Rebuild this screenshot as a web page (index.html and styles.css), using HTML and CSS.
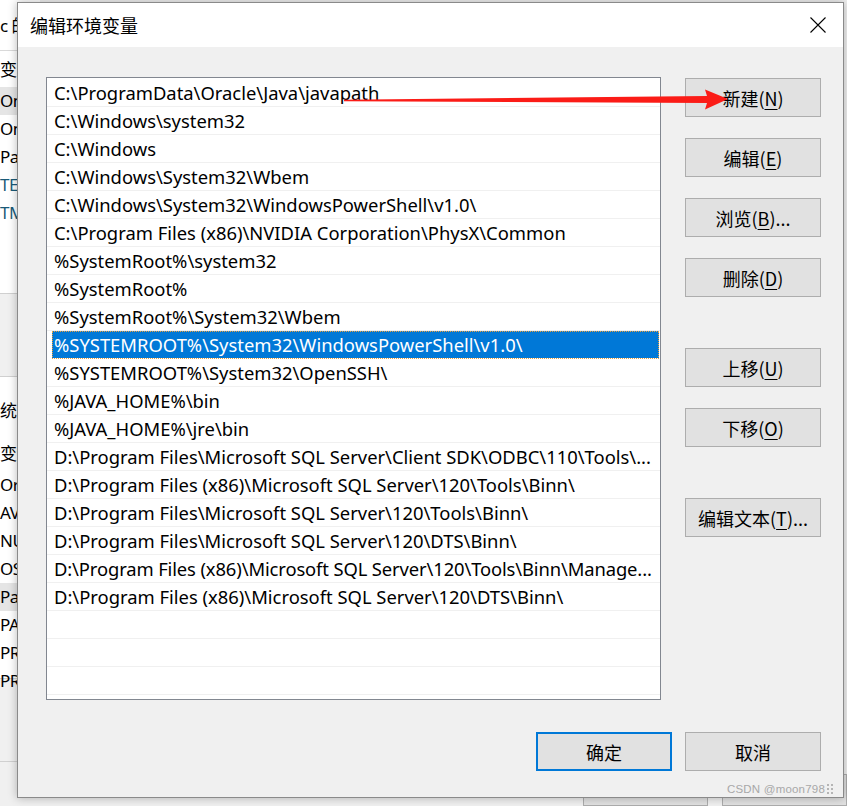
FILE: index.html
```html
<!DOCTYPE html>
<html lang="zh-CN">
<head>
<meta charset="utf-8">
<title>编辑环境变量</title>
<link rel="stylesheet" href="styles.css">
</head>
<body>
<div class="desktop">
  <div class="bgwin">
    <div class="bg-col">
      <div class="bg-title">c 的</div>
      <div class="bg-panel">
        <div class="bg-head">变量</div>
        <div class="bg-row hl">On</div>
        <div class="bg-row">On</div>
        <div class="bg-row">Pat</div>
        <div class="bg-row cy">TEI</div>
        <div class="bg-row cy">TM</div>
      </div>
      <div class="bg-gap"></div>
      <div class="bg-panel sys">
        <div class="bg-head h1">统</div>
        <div class="bg-head h2">变量</div>
        <div class="bg-row">Ori</div>
        <div class="bg-row">AV</div>
        <div class="bg-row">NU</div>
        <div class="bg-row">OS</div>
        <div class="bg-row hl">Pat</div>
        <div class="bg-row">PA</div>
        <div class="bg-row">PR</div>
        <div class="bg-row">PR</div>
      </div>
      <div class="bg-gap2"></div>
    </div>
    <div class="bg-bottom">
      <div class="bg-btn"></div>
      <div class="bg-btn"></div>
    </div>
  </div>

  <div class="dialog">
    <div class="titlebar">
      <span class="title">编辑环境变量</span>
      <svg class="close" width="16" height="16" viewBox="0 0 16 16"><path d="M0.5 0.5 L15.5 15.5 M15.5 0.5 L0.5 15.5" stroke="#000" stroke-width="1.1" fill="none"/></svg>
    </div>
    <div class="body">
      <div class="list">
        <div class="row">C:\ProgramData\Oracle\Java\javapath</div>
        <div class="row">C:\Windows\system32</div>
        <div class="row">C:\Windows</div>
        <div class="row">C:\Windows\System32\Wbem</div>
        <div class="row">C:\Windows\System32\WindowsPowerShell\v1.0\</div>
        <div class="row">C:\Program Files (x86)\NVIDIA Corporation\PhysX\Common</div>
        <div class="row">%SystemRoot%\system32</div>
        <div class="row">%SystemRoot%</div>
        <div class="row">%SystemRoot%\System32\Wbem</div>
        <div class="row sel">%SYSTEMROOT%\System32\WindowsPowerShell\v1.0\</div>
        <div class="row">%SYSTEMROOT%\System32\OpenSSH\</div>
        <div class="row">%JAVA_HOME%\bin</div>
        <div class="row">%JAVA_HOME%\jre\bin</div>
        <div class="row">D:\Program Files\Microsoft SQL Server\Client SDK\ODBC\110\Tools\...</div>
        <div class="row">D:\Program Files (x86)\Microsoft SQL Server\120\Tools\Binn\</div>
        <div class="row">D:\Program Files\Microsoft SQL Server\120\Tools\Binn\</div>
        <div class="row">D:\Program Files\Microsoft SQL Server\120\DTS\Binn\</div>
        <div class="row tight">D:\Program Files (x86)\Microsoft SQL Server\120\Tools\Binn\Manage...</div>
        <div class="row">D:\Program Files (x86)\Microsoft SQL Server\120\DTS\Binn\</div>
        <div class="row"></div>
        <div class="row"></div>
        <div class="row"></div>
        <div class="row"></div>
      </div>
      <div class="buttons">
        <button class="btn">新建(<u>N</u>)</button>
        <button class="btn">编辑(<u>E</u>)</button>
        <button class="btn">浏览(<u>B</u>)...</button>
        <button class="btn">删除(<u>D</u>)</button>
        <button class="btn gap">上移(<u>U</u>)</button>
        <button class="btn">下移(<u>O</u>)</button>
        <button class="btn gap">编辑文本(<u>T</u>)...</button>
      </div>
    </div>
    <div class="footer">
      <button class="btn default">确定</button>
      <button class="btn">取消</button>
    </div>
  </div>

  <svg class="arrow" width="847" height="806" viewBox="0 0 847 806">
    <path d="M344 99.8 L707 96 L705 89.5 L728 99 L705 109.5 L707 103 L344 101.2 Z" fill="#fb1c17"/>
  </svg>

  <div class="watermark">CSDN @moon798<svg class="wm-icon" width="7" height="10" viewBox="0 0 7 10"><g fill="#b5b5b5"><rect x="0" y="0" width="2" height="2"/><rect x="4" y="0" width="2" height="2"/><rect x="0" y="4" width="2" height="2"/><rect x="4" y="4" width="2" height="2"/><rect x="0" y="8" width="2" height="2"/><rect x="4" y="8" width="2" height="2"/></g></svg></div>
</div>
</body>
</html>
```
FILE: styles.css
```css
html, body {
  margin: 0;
  padding: 0;
}
body {
  width: 847px;
  height: 806px;
  overflow: hidden;
  font-family: "Noto Sans", "Noto Sans CJK SC", sans-serif;
  color: #000;
}
.desktop {
  position: relative;
  width: 847px;
  height: 806px;
  overflow: hidden;
  background: #f0f0f0;
}

/* background window (partially visible) */
.bgwin {
  position: absolute;
  inset: 0;
  background: #f0f0f0;
  display: flex;
  flex-direction: column;
  font-size: 17px;
  letter-spacing: -0.5px;
}
.bg-col {
  width: 40px;
  display: flex;
  flex-direction: column;
  overflow: hidden;
}
.bg-title {
  height: 52px;
  box-sizing: border-box;
  background: #fff;
  padding: 14px 0 0 0;
  line-height: 24px;
  border-bottom: 1px solid #d9d9d9;
  white-space: nowrap;
}
.bg-panel {
  background: #fff;
  height: 250px;
  box-sizing: border-box;
  border-bottom: 1px solid #d0d0d0;
}
.bg-head {
  height: 34px;
  line-height: 34px;
  padding-top: 2px;
  white-space: nowrap;
}
.bg-row {
  height: 28px;
  line-height: 28px;
  white-space: nowrap;
}
.bg-row.hl { background: #e5e5e5; }
.bg-row.cy { color: #1a5a78; }
.bg-gap {
  height: 85px;
  border-bottom: 1px solid #d0d0d0;
}
.bg-panel.sys {
  height: 302px;
  border-bottom: 1px solid #d0d0d0;
}
.bg-head.h1 { height: 40px; line-height: 46px; padding-top: 11px; }
.bg-head.h2 { padding-top: 9px; }
.bg-gap2 {
  height: 84px;
  border-bottom: 1px solid #d0d0d0;
}
.bg-bottom {
  display: flex;
  gap: 14px;
  padding: 12px 0 0 583px;
}
.bg-btn {
  width: 134px;
  height: 30px;
  border: 1px solid #adadad;
  background: #e1e1e1;
}

/* dialog window */
.dialog {
  position: absolute;
  left: 17px;
  top: 2px;
  width: 827px;
  height: 796px;
  box-sizing: border-box;
  border: 1px solid #8a8a8a;
  background: #f0f0f0;
  display: flex;
  flex-direction: column;
  box-shadow: 0 0 9px rgba(0, 0, 0, 0.28);
}
.titlebar {
  height: 44px;
  flex: none;
  background: #fff;
  display: flex;
  align-items: center;
  justify-content: space-between;
  padding: 0 17px 0 12px;
}
.title {
  font-family: "Noto Sans CJK SC", sans-serif;
  font-size: 18px;
  line-height: 24px;
  margin-top: -1px;
}
.close { display: block; margin-top: -1px; }

.body {
  display: grid;
  grid-template-columns: 615px 136px;
  column-gap: 24px;
  padding: 30px 22px 0 28px;
}
.list {
  width: 615px;
  height: 623px;
  box-sizing: border-box;
  border: 1px solid #828790;
  background: #fff;
  padding-top: 1px;
  overflow: hidden;
}
.row {
  height: 28px;
  box-sizing: border-box;
  border-bottom: 1px solid #f0f0f0;
  padding-left: 7px;
  font-size: 18.4px;
  line-height: 27px;
  white-space: nowrap;
  overflow: hidden;
}
.row.tight { letter-spacing: -0.12px; }
.row.sel {
  margin-left: 5px;
  margin-right: 1px;
  padding-left: 2px;
  background: #0078d7;
  color: #fff;
  border-bottom-color: #fff;
  outline: 1px dotted #e8a040;
  outline-offset: -1px;
}

.buttons {
  display: flex;
  flex-direction: column;
  gap: 21px;
  padding-top: 1px;
}
.btn {
  width: 136px;
  height: 39px;
  box-sizing: border-box;
  border: 1px solid #adadad;
  background: #e1e1e1;
  font-family: "Noto Sans CJK SC", sans-serif;
  font-size: 18px;
  color: #000;
  padding: 0;
  margin: 0;
  display: flex;
  align-items: center;
  justify-content: center;
  line-height: 24px;
}
.btn u { text-underline-offset: 3px; }
.btn.gap { margin-top: 30px; }

.footer {
  display: flex;
  justify-content: flex-end;
  gap: 13px;
  padding: 32px 22px 0 0;
}
.btn.default {
  border: 2px solid #0078d7;
}

.arrow {
  position: absolute;
  left: 0;
  top: 0;
  pointer-events: none;
}
.watermark {
  position: absolute;
  right: 13px;
  top: 783px;
  font-family: "Liberation Sans", sans-serif;
  font-size: 11.5px;
  color: #a8a8a8;
  display: flex;
  align-items: center;
  gap: 2px;
  letter-spacing: 0.2px;
}
.wm-icon { display: block; }
```
